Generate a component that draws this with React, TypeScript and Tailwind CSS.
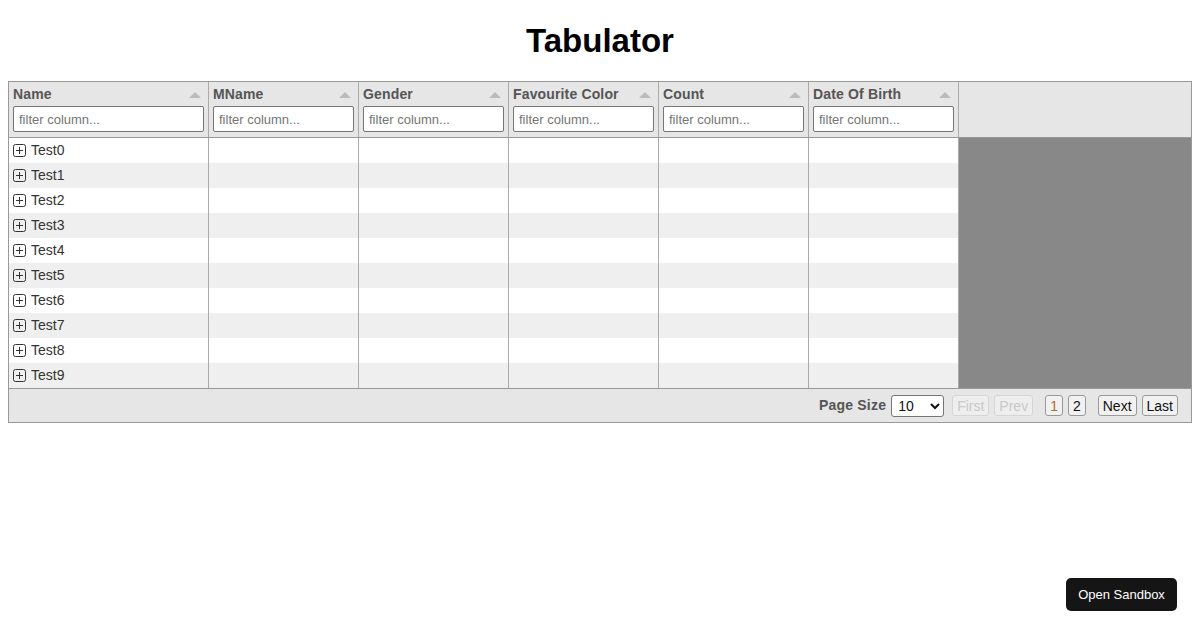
import React from "react";

const cols = [
  { t: "Name", w: "w-[200px]" },
  { t: "MName", w: "w-[150px]" },
  { t: "Gender", w: "w-[150px]" },
  { t: "Favourite Color", w: "w-[150px]" },
  { t: "Count", w: "w-[150px]" },
  { t: "Date Of Birth", w: "w-[150px]" },
];

function PlusBox() {
  return (
    <svg width="13" height="13" viewBox="0 0 13 13" className="shrink-0">
      <rect x="0.5" y="0.5" width="12" height="12" rx="2" fill="none" stroke="#333" strokeWidth="1" />
      <path d="M3 6.5H10M6.5 3V10" stroke="#333" strokeWidth="1" />
    </svg>
  );
}

function Btn({ children, disabled, active }: { children: React.ReactNode; disabled?: boolean; active?: boolean }) {
  return (
    <button
      className={
        "h-[21px] px-[4px] border rounded-[3px] text-[14px] leading-none font-normal " +
        (disabled
          ? "border-[#d5d5d5] text-[#c8c8c8] bg-[#eeeeee]"
          : active
          ? "border-[#999] text-[#c4652a] bg-[#f1f1f1]"
          : "border-[#999] text-[#111] bg-[#f1f1f1]")
      }
    >
      {children}
    </button>
  );
}

export default function App() {
  const rows = Array.from({ length: 10 }, (_, i) => i);
  return (
    <div className="min-h-[630px] bg-white" style={{ fontFamily: '"Liberation Sans", Arial, sans-serif' }}>
      <h1 className="text-center text-[33px] font-bold leading-[37px] pt-[22px] pb-[22px] text-black">Tabulator</h1>
      <div className="mx-[8px] border border-[#999] text-[14px]">
        {/* header */}
        <div className="flex bg-[#e6e6e6] border-b border-[#999] h-[56px]">
          {cols.map((c) => (
            <div key={c.t} className={c.w + " shrink-0 border-r border-[#aaa] px-[4px] pt-[4px]"}>
              <div className="flex items-center justify-between h-[17px] font-bold text-[#555] leading-[17px] tracking-[0.15px]">
                <span>{c.t}</span>
                <span className="w-0 h-0 mr-[3px] border-l-[6px] border-r-[6px] border-b-[6px] border-l-transparent border-r-transparent border-b-[#bbb]" />
              </div>
              <input
                readOnly
                placeholder="filter column..."
                className="mt-[3px] w-full h-[26px] bg-white border border-[#767676] rounded-[2px] px-[5px] text-[13px] text-[#333] placeholder:text-[#757575] outline-none"
              />
            </div>
          ))}
          <div className="flex-1" />
        </div>
        {/* body */}
        <div className="flex bg-[#888]">
          <div className="flex flex-col">
            {rows.map((i) => (
              <div key={i} className={"flex h-[25px] " + (i % 2 ? "bg-[#efefef]" : "bg-white")}>
                {cols.map((c, j) => (
                  <div key={c.t} className={c.w + " shrink-0 border-r border-[#aaa] px-[4px] flex items-center text-[#333]"}>
                    {j === 0 && (
                      <span className="flex items-center gap-[5px]">
                        <PlusBox />
                        <span>Test{i}</span>
                      </span>
                    )}
                  </div>
                ))}
              </div>
            ))}
          </div>
          <div className="flex-1" />
        </div>
        {/* footer */}
        <div className="flex items-center justify-end bg-[#e6e6e6] border-t border-[#999] h-[34px] pr-[13px] font-bold text-[#555]">
          <span className="text-[14px] mr-[5px] tracking-[0.2px]">Page Size</span>
          <select
            defaultValue="10"
            className="h-[22px] w-[53px] border border-[#767676] rounded-[3px] bg-white text-[#111] text-[14px] font-normal px-[2px] mr-[8px]"
          >
            <option>10</option>
            <option>20</option>
          </select>
          <div className="flex items-center gap-[5px]">
            <Btn disabled>First</Btn>
            <Btn disabled>Prev</Btn>
          </div>
          <div className="flex items-center gap-[5px] mx-[12px]">
            <Btn active>1</Btn>
            <Btn>2</Btn>
          </div>
          <div className="flex items-center gap-[5px]">
            <Btn>Next</Btn>
            <Btn>Last</Btn>
          </div>
        </div>
      </div>
      <button
        className="fixed right-[23px] bottom-[19px] h-[33px] w-[111px] rounded-[5px] bg-[#151515] text-white text-[13px]"
        style={{ fontFamily: '"Liberation Sans", Arial, sans-serif' }}
      >
        Open Sandbox
      </button>
    </div>
  );
}
